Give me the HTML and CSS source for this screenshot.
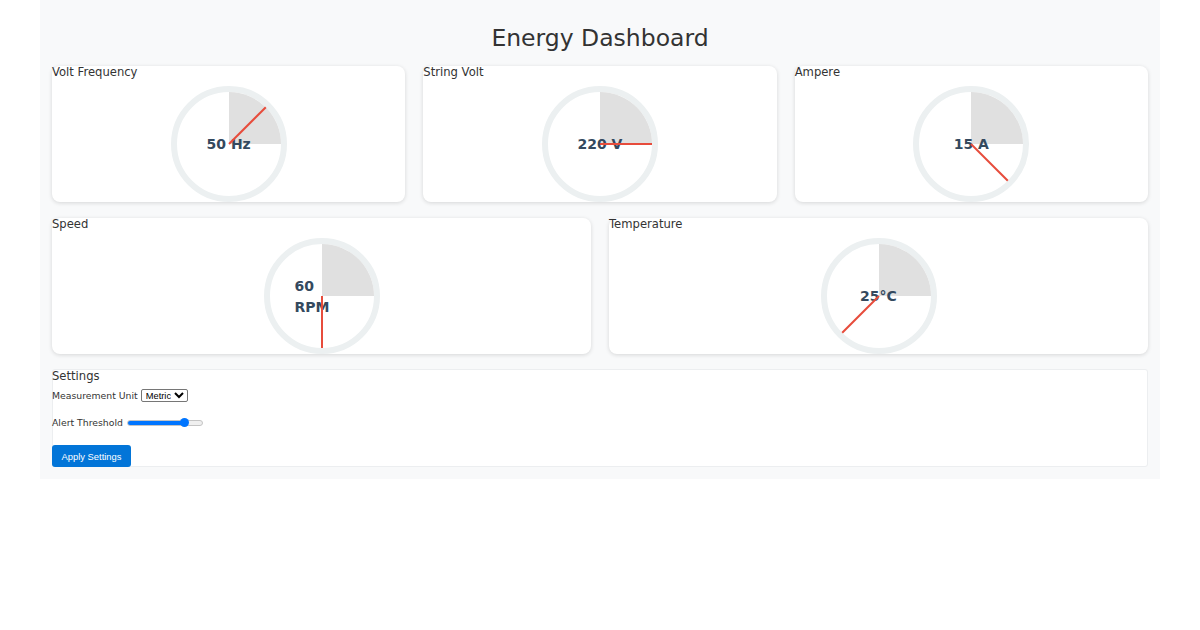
FILE: index.html
```html
<!DOCTYPE html>
<html>
<head>
<meta charset="utf-8">
<title>Energy Dashboard</title>
<link rel="stylesheet" href="styles.css">
</head>
<body>
<div class="container">
  <h1 class="page-title">Energy Dashboard</h1>
  <div class="row row-3">
    <div class="card">
      <h2 class="card-title">Volt Frequency</h2>
      <div class="gauge">
        <svg class="gauge-face" width="116" height="116" viewBox="0 0 116 116"><circle cx="58" cy="58" r="55" fill="#fff" stroke="#ecf0f1" stroke-width="6"/><path d="M58 58 L58 6 A52 52 0 0 1 110 58 Z" fill="#e0e0e0"/></svg>
        <span class="gauge-value">50 Hz</span>
        <svg class="gauge-needle" width="116" height="116" viewBox="0 0 116 116"><line x1="58" y1="58" x2="94.77" y2="21.23" stroke="#e74c3c" stroke-width="2"/></svg>
      </div>
    </div>
    <div class="card">
      <h2 class="card-title">String Volt</h2>
      <div class="gauge">
        <svg class="gauge-face" width="116" height="116" viewBox="0 0 116 116"><circle cx="58" cy="58" r="55" fill="#fff" stroke="#ecf0f1" stroke-width="6"/><path d="M58 58 L58 6 A52 52 0 0 1 110 58 Z" fill="#e0e0e0"/></svg>
        <span class="gauge-value">220 V</span>
        <svg class="gauge-needle" width="116" height="116" viewBox="0 0 116 116"><line x1="58" y1="58" x2="110" y2="58" stroke="#e74c3c" stroke-width="2"/></svg>
      </div>
    </div>
    <div class="card">
      <h2 class="card-title">Ampere</h2>
      <div class="gauge">
        <svg class="gauge-face" width="116" height="116" viewBox="0 0 116 116"><circle cx="58" cy="58" r="55" fill="#fff" stroke="#ecf0f1" stroke-width="6"/><path d="M58 58 L58 6 A52 52 0 0 1 110 58 Z" fill="#e0e0e0"/></svg>
        <span class="gauge-value">15 A</span>
        <svg class="gauge-needle" width="116" height="116" viewBox="0 0 116 116"><line x1="58" y1="58" x2="94.77" y2="94.77" stroke="#e74c3c" stroke-width="2"/></svg>
      </div>
    </div>
  </div>
  <div class="row row-2">
    <div class="card">
      <h2 class="card-title">Speed</h2>
      <div class="gauge">
        <svg class="gauge-face" width="116" height="116" viewBox="0 0 116 116"><circle cx="58" cy="58" r="55" fill="#fff" stroke="#ecf0f1" stroke-width="6"/><path d="M58 58 L58 6 A52 52 0 0 1 110 58 Z" fill="#e0e0e0"/></svg>
        <span class="gauge-value">60 RPM</span>
        <svg class="gauge-needle" width="116" height="116" viewBox="0 0 116 116"><line x1="58" y1="58" x2="58" y2="110" stroke="#e74c3c" stroke-width="2"/></svg>
      </div>
    </div>
    <div class="card">
      <h2 class="card-title">Temperature</h2>
      <div class="gauge">
        <svg class="gauge-face" width="116" height="116" viewBox="0 0 116 116"><circle cx="58" cy="58" r="55" fill="#fff" stroke="#ecf0f1" stroke-width="6"/><path d="M58 58 L58 6 A52 52 0 0 1 110 58 Z" fill="#e0e0e0"/></svg>
        <span class="gauge-value">25°C</span>
        <svg class="gauge-needle" width="116" height="116" viewBox="0 0 116 116"><line x1="58" y1="58" x2="21.23" y2="94.77" stroke="#e74c3c" stroke-width="2"/></svg>
      </div>
    </div>
  </div>
  <div class="settings">
    <h3 class="settings-title">Settings</h3>
    <div class="form-group">
      <label class="form-label" for="unit">Measurement Unit</label>
      <select id="unit" class="form-select"><option>Metric</option><option>Imperial</option></select>
    </div>
    <div class="form-group form-group-range">
      <label class="form-label" for="threshold">Alert Threshold</label>
      <input id="threshold" class="form-range" type="range" min="0" max="100" value="80">
    </div>
    <button class="btn-apply">Apply Settings</button>
  </div>
</div>
</body>
</html>
```

FILE: styles.css
```css
html, body {
  margin: 0;
  padding: 0;
  background: #fff;
}
body {
  font-family: "DejaVu Sans", sans-serif;
  color: #333;
}
.container {
  width: 1120px;
  margin: 0 auto;
  box-sizing: border-box;
  background: #f8f9fa;
  padding: 24px 12px 12px;
}
.page-title {
  margin: 0 0 14px;
  font-size: 23.5px;
  line-height: 28px;
  font-weight: normal;
  text-align: center;
  color: #333;
}
.row {
  display: grid;
  gap: 18px;
  margin-bottom: 16px;
}
.row-3 { grid-template-columns: repeat(3, 1fr); }
.row-2 { grid-template-columns: repeat(2, 1fr); margin-bottom: 15px; }
.card {
  background: #fff;
  border-radius: 8px;
  box-shadow: 0 1px 4px rgba(0, 0, 0, 0.14);
  height: 136px;
  display: flex;
  flex-direction: column;
  align-items: center;
}
.card-title {
  align-self: stretch;
  margin: 0;
  font-size: 11.6px;
  line-height: 13px;
  font-weight: normal;
  color: #333;
}
.gauge {
  position: relative;
  width: 116px;
  height: 116px;
  margin-top: 7px;
}
.gauge-face { display: block; }
.gauge-value {
  position: absolute;
  left: 50%;
  top: 50%;
  transform: translate(-50%, -50%);
  max-width: 54px;
  font-size: 14px;
  line-height: 20.5px;
  font-weight: bold;
  color: #34495e;
}
.gauge-needle {
  position: absolute;
  left: 0;
  top: 0;
}
.settings {
  background: #fff;
  box-shadow: inset 0 0 0 1px #eceef0;
  border-radius: 3px;
  height: 98px;
  box-sizing: border-box;
}
.settings-title {
  margin: 0 0 6px;
  font-size: 11.6px;
  line-height: 14px;
  font-weight: normal;
  color: #333;
}
.form-group {
  display: flex;
  align-items: center;
  height: 13px;
  margin-bottom: 14px;
}
.form-group-range {
  margin-top: 1px;
  margin-bottom: 16px;
}
.form-label {
  font-size: 9.3px;
  color: #333;
  margin-right: 3px;
}
.form-select {
  font-family: "Liberation Sans", Arial, sans-serif;
  font-size: 9.3px;
  height: 13px;
  padding: 0;
  width: 47px;
  border: 1px solid #767676;
  border-radius: 2px;
  background: #fff;
  color: #000;
}
.form-range {
  -webkit-appearance: none;
  appearance: none;
  width: 74px;
  height: 4px;
  margin: 0 0 0 1px;
  border-radius: 3px;
  border: 1px solid #c4c4c4;
  background: linear-gradient(to right, #0075ff 0, #0075ff 78%, #efefef 78%);
}
.form-range::-webkit-slider-thumb {
  -webkit-appearance: none;
  width: 9px;
  height: 9px;
  border-radius: 50%;
  background: #0075ff;
  border: none;
}
.btn-apply {
  display: block;
  margin-top: 2px;
  width: 79px;
  height: 22px;
  padding: 0;
  font-family: "Liberation Sans", Arial, sans-serif;
  font-size: 9.4px;
  color: #fff;
  background: #0275d8;
  border: none;
  border-radius: 3px;
}
```
